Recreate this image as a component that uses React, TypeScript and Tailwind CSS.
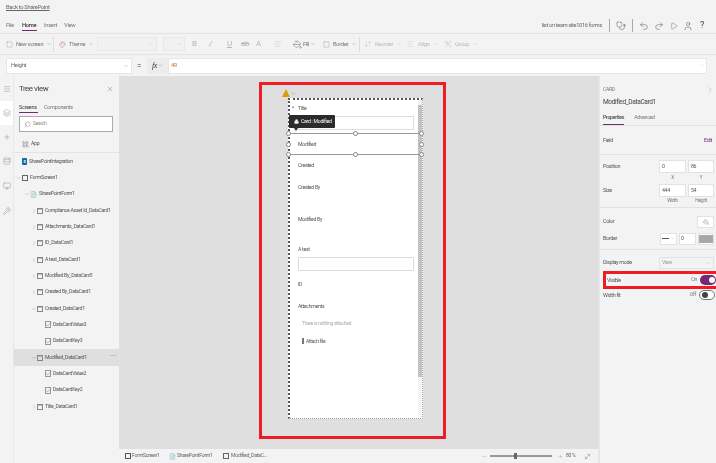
import React from "react";
import {
  ChevronDown, ChevronRight, X, Menu, Plus, Search, Stethoscope, Undo2, Redo2, Play, User,
  Layers, Database, Monitor, Wrench, LayoutGrid, Palette, PaintBucket, Square, Lock,
  ArrowDownUp, AlignLeft, Group, MoveDiagonal, Check, Minus, FileText,
} from "lucide-react";

function RibbonItem({ w, icon, label, ml = "", gap = "gap-[3px]" }: { w: string; icon: React.ReactNode; label: string; ml?: string; gap?: string }) {
  return (
    <div className={`flex items-center ${gap} ${w} ${ml}`}>
      {icon}
      <span className="whitespace-nowrap">{label}</span>
      <ChevronDown size={6} strokeWidth={1.2} />
    </div>
  );
}

type Row = { label: string; depth: number; caret?: "open" | "closed"; kind: string; selected?: boolean };

const rows: Row[] = [
  { label: "App", depth: 0, kind: "app" },
  { label: "SharePointIntegration", depth: 0, kind: "sp" },
  { label: "FormScreen1", depth: 1, caret: "open", kind: "screen" },
  { label: "SharePointForm1", depth: 2, caret: "open", kind: "form" },
  { label: "Compliance Asset Id_DataCard1", depth: 3, caret: "closed", kind: "card" },
  { label: "Attachments_DataCard1", depth: 3, caret: "closed", kind: "card" },
  { label: "ID_DataCard1", depth: 3, caret: "closed", kind: "card" },
  { label: "A test_DataCard1", depth: 3, caret: "closed", kind: "card" },
  { label: "Modified By_DataCard1", depth: 3, caret: "closed", kind: "card" },
  { label: "Created By_DataCard1", depth: 3, caret: "closed", kind: "card" },
  { label: "Created_DataCard1", depth: 3, caret: "open", kind: "card" },
  { label: "DataCardValue3", depth: 4, kind: "check" },
  { label: "DataCardKey3", depth: 4, kind: "check" },
  { label: "Modified_DataCard1", depth: 3, caret: "open", kind: "card", selected: true },
  { label: "DataCardValue2", depth: 4, kind: "check" },
  { label: "DataCardKey2", depth: 4, kind: "check" },
  { label: "Title_DataCard1", depth: 3, caret: "closed", kind: "card" },
];

const indent = ["ml-[8px]", "ml-[2px]", "ml-[10px]", "ml-[17px]", "ml-[24px]"];

function NodeIcon({ kind }: { kind: string }) {
  if (kind === "app") return <LayoutGrid size={7} strokeWidth={1} className="text-[#444]" />;
  if (kind === "sp")
    return <span className="flex h-[7px] w-[5px] items-center justify-center rounded-[1px] bg-[#0b6aa8] text-[4px] font-bold text-white">S</span>;
  if (kind === "screen") return <span className="block h-[6px] w-[6px] border border-[#666]" />;
  if (kind === "form") return <FileText size={7} strokeWidth={1} className="text-[#2a8a9a]" />;
  if (kind === "card")
    return (
      <span className="block h-[6px] w-[6px] border border-[#888]">
        <span className="block h-[1px] w-full bg-[#bbb]" />
      </span>
    );
  return (
    <span className="flex h-[7px] w-[6px] items-center justify-center border border-[#999]">
      <Check size={7} strokeWidth={2} className="shrink-0 text-[#2aa5a5]" />
    </span>
  );
}

function TreeRow({ r }: { r: Row }) {
  return (
    <div className={`relative flex h-[16.35px] shrink-0 items-center ${r.selected ? "bg-[#dfdfdf]" : ""}`}>
      <div className={`flex items-center ${indent[r.depth]}`}>
        {r.depth >= 1 && r.depth <= 3 ? (
          <span className="w-[6px]">
            {r.caret === "open" ? (
              <ChevronDown size={6} strokeWidth={1} className="text-[#666]" />
            ) : (
              <ChevronRight size={6} strokeWidth={1} className="text-[#666]" />
            )}
          </span>
        ) : null}
        {r.depth === 4 ? <span className="w-[7px]" /> : null}
        <NodeIcon kind={r.kind} />
        <span className="ml-[2px] whitespace-nowrap text-[5.2px] text-[#555]">{r.label}</span>
      </div>
      {r.selected ? <span className="absolute right-[2px] top-[2px] text-[7px] leading-[10px] tracking-[0.5px] text-[#666]">···</span> : null}
    </div>
  );
}

function Field({ label, mt = "" }: { label: string; mt?: string }) {
  return <div className={`${mt} text-[5.2px] leading-[8px] text-[#555]`}>{label}</div>;
}

function Handle({ cls }: { cls: string }) {
  return <span className={`absolute h-[5px] w-[5px] rounded-full border border-[#888] bg-white ${cls}`} />;
}

function Num({ v, w }: { v: string; w: string }) {
  return <div className={`flex h-[13px] items-center border border-[#e2e2e2] bg-white pl-[2px] text-[5.2px] text-[#555] ${w}`}>{v}</div>;
}

function PropRow({ label, children }: { label: string; children?: React.ReactNode }) {
  return (
    <div className="flex h-[13px] items-center justify-between">
      <span className="text-[5.4px] text-[#555]">{label}</span>
      {children}
    </div>
  );
}

function Toggle({ on }: { on: boolean }) {
  return (
    <div className={`flex h-[10px] w-[16px] items-center rounded-full px-[1.5px] ${on ? "justify-end bg-[#742774]" : "justify-start border border-[#777] bg-white"}`}>
      <span className={`h-[6px] w-[6px] rounded-full ${on ? "bg-white" : "bg-[#444]"}`} />
    </div>
  );
}

export default function App() {
  return (
    <div className="flex h-[463px] w-[716px] flex-col overflow-hidden bg-[#f3f3f3] font-['Roboto',sans-serif] tracking-[-0.3px] text-[#555] blur-[0.3px]">
      {/* top */}
      <div className="h-[18px] shrink-0 pl-[6px] pt-[3px] text-[5.8px] leading-[8px] text-[#666] underline">Back to SharePoint</div>
      <div className="flex h-[16px] shrink-0 items-center border-b border-[#e2e2e2] pl-[6px] pr-[6px] text-[5.8px] text-[#777]">
        <span className="w-[16px]">File</span>
        <span className="relative w-[22px] font-medium text-[#333]">
          Home
          <span className="absolute left-0 top-[9px] h-[1px] w-[15px] bg-[#742774]" />
        </span>
        <span className="w-[20px]">Insert</span>
        <span>View</span>
        <span className="ml-auto text-[5.6px] text-[#666]">list on team site1016 forms</span>
        <span className="ml-[7px] h-[13px] w-px bg-[#aaa]" />
        <Stethoscope size={10} strokeWidth={1} className="ml-[6px] text-[#444]" />
        <span className="ml-[6px] mr-[6px] h-[13px] w-px bg-[#aaa]" />
        <Undo2 size={10} strokeWidth={1} className="text-[#333]" />
        <Redo2 size={10} strokeWidth={1} className="ml-[5px] text-[#333]" />
        <Play size={8} strokeWidth={1} className="ml-[6px] text-[#333]" />
        <User size={10} strokeWidth={1} className="ml-[5px] text-[#333]" />
        <span className="ml-[7px] mr-[6px] text-[9px] leading-[9px] text-[#444]">?</span>
      </div>

      {/* ribbon */}
      <div className="flex h-[21px] shrink-0 items-center border-b border-[#e2e2e2] pl-[6px] text-[5.8px] text-[#777]">
        <RibbonItem w="w-[47px]" icon={<Square size={7} strokeWidth={1} />} label="New screen" />
        <span className="mr-[5px] h-[15px] w-px bg-[#ddd]" />
        <RibbonItem w="w-[38px]" icon={<Palette size={7} strokeWidth={1} className="text-[#a66]" />} label="Theme" />
        <div className="flex h-[14px] w-[60px] items-center justify-end border border-[#e8e8e8] bg-[#f1f1f1] pr-[2px]">
          <ChevronDown size={6} strokeWidth={1} className="text-[#aaa]" />
        </div>
        <div className="ml-[6px] flex h-[14px] w-[22px] items-center justify-end border border-[#e8e8e8] bg-[#f1f1f1] pr-[2px]">
          <ChevronDown size={6} strokeWidth={1} className="text-[#aaa]" />
        </div>
        <div className="ml-[7px] flex items-center text-[8px] text-[#b5b5b5]">
          <span className="w-[17px]">B</span>
          <span className="w-[18px] italic">/</span>
          <span className="w-[14px] underline">U</span>
          <span className="w-[15px] line-through">ab</span>
          <span className="w-[18px]">A</span>
          <AlignLeft size={8} strokeWidth={1} />
        </div>
        <RibbonItem ml="ml-[11px]" w="w-[30px]" gap="gap-[1px]" icon={<PaintBucket size={9} strokeWidth={1} className="text-[#444]" />} label="Fill" />
        <RibbonItem w="w-[36px]" icon={<Square size={7} strokeWidth={1} />} label="Border" />
        <span className="mr-[4px] h-[15px] w-px bg-[#ddd]" />
        <div className="flex items-center text-[#bbb]">
          <RibbonItem w="w-[43px]" icon={<ArrowDownUp size={8} strokeWidth={1} className="text-[#9cc]" />} label="Reorder" />
          <RibbonItem w="w-[37px]" icon={<AlignLeft size={8} strokeWidth={1} />} label="Align" />
          <RibbonItem w="w-[35px]" icon={<Group size={8} strokeWidth={1} />} label="Group" />
        </div>
      </div>

      {/* formula bar */}
      <div className="flex h-[21px] shrink-0 items-center pl-[6px] pr-[9px] text-[5.8px]">
        <div className="flex h-[16px] w-[126px] items-center justify-between border border-[#e6e6e6] bg-white pl-[4px] pr-[2px] text-[#666]">
          Height
          <ChevronDown size={6} strokeWidth={1.2} />
        </div>
        <span className="ml-[5px] w-[10px] text-[8px] text-[#444]">=</span>
        <div className="flex h-[16px] w-[21px] items-center justify-center gap-px bg-[#ececec] font-['Liberation_Serif',serif] text-[8px] italic text-[#333]">
          fx
          <ChevronDown size={5} strokeWidth={1} />
        </div>
        <div className="flex h-[16px] flex-1 items-center justify-between border border-[#e6e6e6] bg-white pl-[2px] pr-[2px] text-[#c96a2b]">
          49
          <ChevronDown size={5} strokeWidth={1} className="text-[#888]" />
        </div>
      </div>

      {/* body */}
      <div className="flex min-h-0 flex-1">
        <div className="flex w-[13px] shrink-0 flex-col items-center text-[#666]">
          <div className="flex h-[25px] items-center"><Menu size={8} strokeWidth={1} /></div>
          <div className="flex h-[24px] w-full items-center justify-center bg-white"><Layers size={8} strokeWidth={1} /></div>
          <div className="flex h-[24px] items-center"><Plus size={8} strokeWidth={1} /></div>
          <div className="flex h-[24px] items-center"><Database size={8} strokeWidth={1} /></div>
          <div className="flex h-[25px] items-center"><Monitor size={8} strokeWidth={1} /></div>
          <div className="flex h-[25px] items-center"><Wrench size={8} strokeWidth={1} /></div>
        </div>

        {/* tree */}
        <div className="flex w-[106px] shrink-0 flex-col border-l border-[#e8e8e8]">
          <div className="flex h-[26px] shrink-0 items-center justify-between pl-[5px] pr-[5px]">
            <span className="text-[8px] tracking-[-0.5px] text-[#444]">Tree view</span>
            <X size={8} strokeWidth={1} className="text-[#555]" />
          </div>
          <div className="flex h-[14px] shrink-0 gap-[7px] pl-[5px] text-[5.6px] leading-[10px]">
            <span className="relative text-[#444]">
              Screens
              <span className="absolute left-0 top-[9.5px] h-[1px] w-[19px] bg-[#742774]" />
            </span>
            <span className="text-[#777]">Components</span>
          </div>
          <div className="ml-[5px] mr-[6px] flex h-[16px] shrink-0 items-center gap-[2px] border border-[#aaa] bg-white pl-[4px] text-[5px] text-[#888]">
            <Search size={7} strokeWidth={1} className="-scale-x-100 text-[#742774]" />
            Search
          </div>
          <div className="mt-[4px] flex flex-col">
            <TreeRow r={rows[0]} />
            <div className="h-px bg-[#e4e4e4]" />
            {rows.slice(1).map((r) => (
              <TreeRow key={r.label} r={r} />
            ))}
          </div>
        </div>

        {/* canvas */}
        <div className="flex min-w-0 flex-1 flex-col">
          <div className="relative flex-1 bg-[#dfdfdf]">
            <div className="absolute left-[140px] top-[6px] h-[357px] w-[187px] border-[3px] border-[#ee1c25]" />
            <div className="absolute left-[163px] top-[13px] flex items-center">
              <span className="h-0 w-0 border-x-[4px] border-b-[8px] border-x-transparent border-b-[#dd9a0c]" />
              <ChevronDown size={7} strokeWidth={1} className="text-[#666]" />
            </div>
            {/* phone */}
            <div className="absolute left-[169px] top-[22px] flex h-[321px] w-[135px] border-b border-l-2 border-r border-t-2 border-dotted border-[#555] border-b-[#999] border-r-[#aaa] bg-white">
              <div className="flex min-w-0 flex-1 flex-col pl-[7px] pr-[3px] pt-[4px]">
                <div className="-ml-[5px] flex text-[5.2px] leading-[8px] text-[#555]">
                  <span className="w-[6px]">*</span>
                  Title
                </div>
                <div className="ml-[1px] mt-[4px] h-[14px] w-[116px] border border-[#ddd]" />
                <Field label="Modified" mt="ml-[1px] mt-[10px]" />
                <Field label="Created" mt="ml-[1px] mt-[13px]" />
                <Field label="Created By" mt="ml-[1px] mt-[14px]" />
                <Field label="Modified By" mt="ml-[1px] mt-[24px]" />
                <Field label="A test" mt="ml-[1px] mt-[22px]" />
                <div className="ml-[1px] mt-[4px] h-[14px] w-[116px] border border-[#ddd]" />
                <Field label="ID" mt="ml-[1px] mt-[9px]" />
                <Field label="Attachments" mt="ml-[1px] mt-[14px]" />
                <div className="ml-[5px] mt-[9px] text-[5px] leading-[8px] text-[#aaa]">There is nothing attached.</div>
                <div className="ml-[5px] mt-[10px] flex items-center gap-[2px] text-[5px] leading-[8px] text-[#555]">
                  <span className="h-[6px] w-[2px] bg-[#777]" />
                  Attach file
                </div>
              </div>
              <div className="flex w-[4px] shrink-0 flex-col">
                <div className="h-[5px] bg-[#f1f1f1]" />
                <div className="h-[272px] bg-[#c2c2c2]" />
                <div className="flex-1 bg-[#f5f5f5]" />
              </div>
            </div>
            {/* selection */}
            <div className="absolute left-[169px] top-[57px] h-[22px] w-[134px] border-y border-[#999]" />
            <Handle cls="left-[167px] top-[55px]" />
            <Handle cls="left-[234px] top-[55px]" />
            <Handle cls="left-[300px] top-[55px]" />
            <Handle cls="left-[167px] top-[66px]" />
            <Handle cls="left-[300px] top-[66px]" />
            <Handle cls="left-[167px] top-[76px]" />
            <Handle cls="left-[234px] top-[76px]" />
            <Handle cls="left-[300px] top-[76px]" />
            {/* tooltip */}
            <div className="absolute left-[170px] top-[39px] flex h-[13px] w-[46px] items-center gap-[2px] rounded-[1px] bg-[#2b2b2b] pl-[5px] text-[5.2px] text-white">
              <Lock size={5} strokeWidth={1.5} className="fill-white" />
              <span className="whitespace-nowrap">Card : Modified</span>
              <span className="absolute left-[5px] top-[13px] h-0 w-0 border-x-[2.5px] border-t-[3px] border-x-transparent border-t-[#2b2b2b]" />
            </div>
          </div>
          <div className="flex h-[14px] shrink-0 items-center pl-[6px] text-[5.2px] text-[#666]">
            <span className="h-[6px] w-[6px] border border-[#555]" />
            <span className="ml-[1px] w-[37px] whitespace-nowrap">FormScreen1</span>
            <FileText size={7} strokeWidth={1} className="text-[#2a8a9a]" />
            <span className="ml-[1px] w-[46px] whitespace-nowrap">SharePointForm1</span>
            <span className="h-[6px] w-[6px] border border-[#666]" />
            <span className="ml-[2px] whitespace-nowrap">Modified_DataC...</span>
            <div className="ml-auto flex items-center pr-[7px]">
              <Minus size={5} strokeWidth={1} />
              <div className="relative ml-[3px] h-[1.5px] w-[62px] bg-[#999]">
                <span className="absolute left-[24px] top-[-2.5px] h-[6px] w-[2.5px] bg-[#666]" />
              </div>
              <Plus size={5} strokeWidth={1} className="ml-[6px]" />
              <span className="ml-[3px] w-[16px] text-[5px]">80 %</span>
              <MoveDiagonal size={7} strokeWidth={1} className="ml-[2px] text-[#444]" />
            </div>
          </div>
        </div>

        {/* properties */}
        <div className="flex w-[118px] shrink-0 flex-col border-l-2 border-[#e6e6e6] pl-[3px]">
          <div className="flex h-[19px] shrink-0 items-end justify-between pr-[1px] text-[5px] text-[#777]">
            <span className="mb-[2px]">CARD</span>
            <ChevronRight size={10} strokeWidth={0.8} className="text-[#888]" />
          </div>
          <div className="mt-[1px] h-[12px] shrink-0 text-[6.6px] leading-[12px] tracking-[-0.4px] text-[#444]">Modified_DataCard1</div>
          <div className="-ml-[3px] mt-[4px] flex h-[14px] shrink-0 gap-[10px] border-b border-[#e2e2e2] pl-[3px] text-[5.2px] leading-[10px]">
            <span className="relative h-[13px] border-b border-[#742774] font-medium text-[#444]">Properties</span>
            <span className="text-[#777]">Advanced</span>
          </div>
          <div className="-ml-[3px] flex h-[29px] shrink-0 items-center justify-between border-b border-[#e2e2e2] pl-[3px] pr-[4px]">
            <span className="text-[5.4px] text-[#555]">Field</span>
            <span className="text-[5.4px] text-[#742774]">Edit</span>
          </div>
          <div className="-ml-[3px] flex h-[53px] shrink-0 flex-col border-b border-[#e2e2e2] pl-[3px] pr-[2px] pt-[5px]">
            <PropRow label="Position">
              <div className="flex gap-[2px]"><Num v="0" w="w-[27px]" /><Num v="86" w="w-[26px]" /></div>
            </PropRow>
            <div className="flex h-[11px] items-center justify-end text-[4.6px] text-[#777]">
              <span className="w-[27px] text-center">X</span><span className="ml-[2px] w-[26px] text-center">Y</span>
            </div>
            <PropRow label="Size">
              <div className="flex gap-[2px]"><Num v="444" w="w-[27px]" /><Num v="54" w="w-[26px]" /></div>
            </PropRow>
            <div className="flex h-[9px] items-center justify-end text-[4.6px] text-[#777]">
              <span className="w-[27px] text-center">Width</span><span className="ml-[2px] w-[26px] text-center">Height</span>
            </div>
          </div>
          <div className="-ml-[3px] flex h-[42px] shrink-0 flex-col border-b border-[#e2e2e2] pl-[3px] pr-[2px] pt-[7px]">
            <PropRow label="Color">
              <div className="flex h-[12px] w-[17px] items-center justify-center border border-[#e2e2e2] bg-white">
                <PaintBucket size={6} strokeWidth={1} className="text-[#444]" />
              </div>
            </PropRow>
            <div className="mt-[4px]">
              <PropRow label="Border">
                <div className="flex items-center gap-[2px]">
                  <div className="flex h-[12px] w-[17px] items-center justify-between border border-[#e2e2e2] bg-white px-[1px]">
                    <span className="h-px w-[7px] bg-[#555]" />
                    <ChevronDown size={5} strokeWidth={1} />
                  </div>
                  <div className="flex h-[12px] w-[17px] items-center border border-[#e2e2e2] bg-white pl-[1px] text-[5.2px]">0</div>
                  <div className="flex h-[12px] w-[16px] items-center justify-center border border-[#e2e2e2] bg-white">
                    <span className="h-[8px] w-[14px] bg-[#a8a8a8]" />
                  </div>
                </div>
              </PropRow>
            </div>
          </div>
          <div className="-ml-[3px] mt-[6px] flex shrink-0 flex-col pl-[3px] pr-[2px]">
            <PropRow label="Display mode">
              <div className="flex h-[12px] w-[55px] items-center justify-between border border-[#e2e2e2] pl-[2px] pr-[2px] text-[5.2px] text-[#999]">
                View
                <ChevronDown size={6} strokeWidth={1} />
              </div>
            </PropRow>
          </div>
          <div className="-mr-[1px] mt-[2px] flex h-[18px] shrink-0 items-center justify-between border-y-[3px] border-l-[3px] border-[#ee1c25] pl-[1px]">
            <span className="text-[5.4px] text-[#555]">Visible</span>
            <div className="flex items-center gap-[3px] pr-[1px]">
              <span className="text-[5.2px] text-[#777]">On</span>
              <Toggle on />
            </div>
          </div>
          <div className="mt-[1px] flex h-[10px] shrink-0 items-center justify-between pr-[1px]">
            <span className="text-[5.4px] text-[#555]">Width fit</span>
            <div className="flex items-center gap-[3px]">
              <span className="text-[5.2px] text-[#777]">Off</span>
              <Toggle on={false} />
            </div>
          </div>
        </div>
      </div>
    </div>
  );
}
